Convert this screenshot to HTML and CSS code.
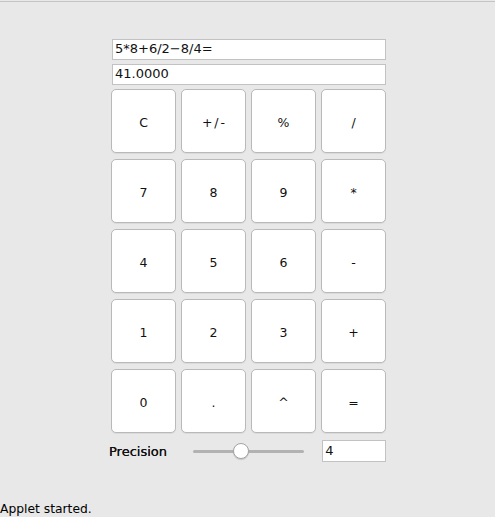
FILE: index.html
```html
<!DOCTYPE html>
<html>
<head>
<meta charset="utf-8">
<link rel="stylesheet" href="styles.css">
</head>
<body>
<div class="topline"></div>
<div class="calc">
  <div class="field expr">5*8+6/2&#8722;8/4=</div>
  <div class="field result">41.0000</div>
  <div class="keys">
    <div class="key">C</div>
    <div class="key spaced">+/-</div>
    <div class="key">%</div>
    <div class="key">/</div>
    <div class="key">7</div>
    <div class="key">8</div>
    <div class="key">9</div>
    <div class="key">*</div>
    <div class="key">4</div>
    <div class="key">5</div>
    <div class="key">6</div>
    <div class="key">-</div>
    <div class="key">1</div>
    <div class="key">2</div>
    <div class="key">3</div>
    <div class="key">+</div>
    <div class="key">0</div>
    <div class="key">.</div>
    <div class="key">^</div>
    <div class="key">=</div>
  </div>
  <div class="precision">
    <div class="plabel">Precision</div>
    <div class="slider">
      <div class="track"></div>
      <div class="knob"></div>
    </div>
    <div class="field pfield">4</div>
  </div>
</div>
<div class="status">Applet started.</div>
</body>
</html>
```
FILE: styles.css
```css
html, body {
  margin: 0;
  padding: 0;
  background: #e8e8e8;
  font-family: "DejaVu Sans", "Liberation Sans", sans-serif;
  color: #1a1a1a;
  overflow: hidden;
}
.topline {
  margin-top: 1px;
  height: 0;
  border-top: 1px solid #c4c4c4;
}
.calc {
  margin-left: 111px;
  width: 275px;
  margin-top: 37px;
  display: flex;
  flex-direction: column;
}
.field {
  box-sizing: border-box;
  background: #fff;
  border: 1px solid #c2c2c2;
  font-size: 13px;
  line-height: 18px;
  padding-left: 2px;
  color: #111;
}
.expr {
  margin-left: 1px;
  height: 21px;
}
.result {
  margin-left: 1px;
  margin-top: 4px;
  height: 21px;
}
.keys {
  margin-top: 4px;
  display: grid;
  grid-template-columns: repeat(4, 65px);
  grid-auto-rows: 64px;
  column-gap: 5px;
  row-gap: 6px;
}
.key {
  box-sizing: border-box;
  background: #fff;
  border: 1px solid #b9b9b9;
  border-radius: 5px;
  box-shadow: 0 1px 0 rgba(0,0,0,0.06);
  display: flex;
  align-items: center;
  justify-content: center;
  padding-top: 2px;
  font-size: 12.5px;
  color: #111;
}
.spaced {
  letter-spacing: 2px;
  padding-left: 2px;
}
.precision {
  margin-top: 7px;
  height: 22px;
  display: flex;
  align-items: center;
}
.plabel {
  margin-left: -2px;
  width: 84px;
  font-size: 13px;
  color: #111;
  text-shadow: 0 0 0.4px #111;
}
.slider {
  position: relative;
  width: 112px;
  height: 22px;
}
.track {
  position: absolute;
  left: 0;
  right: 0;
  top: 10px;
  height: 3px;
  border-radius: 2px;
  background: #b2b2b2;
}
.knob {
  position: absolute;
  left: 40px;
  top: 3px;
  width: 16px;
  height: 16px;
  box-sizing: border-box;
  border-radius: 50%;
  background: #fff;
  border: 1px solid #a4a4a4;
  box-shadow: 0 1px 1px rgba(0,0,0,0.15);
}
.pfield {
  margin-left: 18px;
  width: 64px;
  height: 22px;
  line-height: 19px;
}
.status {
  margin-top: 39px;
  font-size: 12.3px;
  line-height: 16px;
  color: #000;
}
```
